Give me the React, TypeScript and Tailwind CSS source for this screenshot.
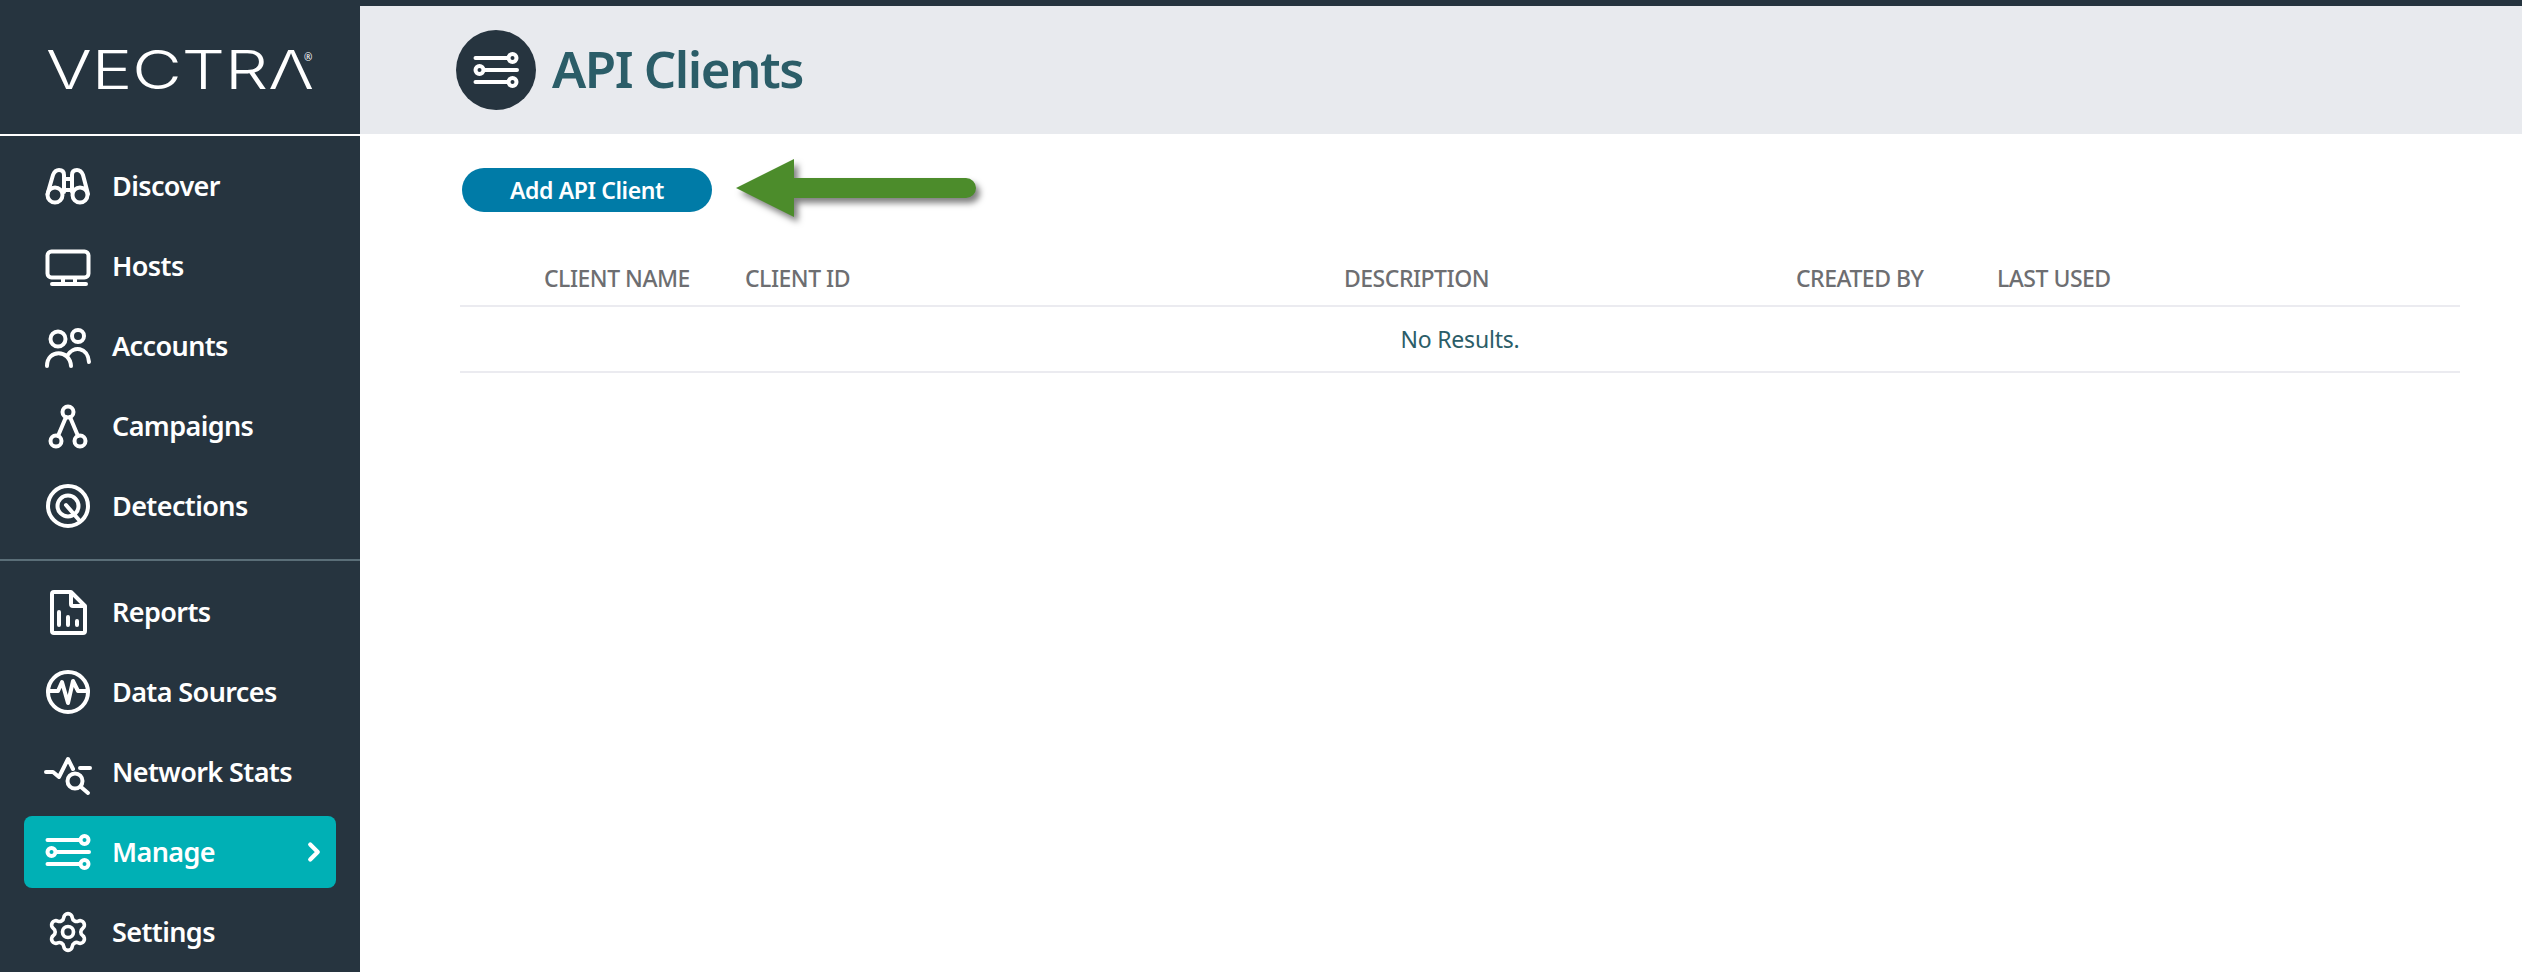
import { Settings, ChevronRight } from "lucide-react";
import type { ReactNode } from "react";

function Icon({ children }: { children: ReactNode }) {
  return (
    <svg
      viewBox="0 0 44 44"
      fill="none"
      stroke="currentColor"
      strokeWidth={4}
      strokeLinecap="round"
      strokeLinejoin="round"
      className="w-[44px] h-[44px] shrink-0 overflow-visible text-white"
    >
      {children}
    </svg>
  );
}

const ManageIcon = () => (
  <Icon>
    <path d="M1.500 10H33M11 22H43M1.500 34H33" />
    <circle cx="38.500" cy="10" r="4" />
    <circle cx="5.500" cy="22" r="4" />
    <circle cx="38.500" cy="34" r="4" />
  </Icon>
);

const navTop = [
  {
    label: "Discover",
    icon: (
      <Icon>
        <circle cx="9" cy="31" r="7.500" />
        <circle cx="34" cy="31" r="7.500" />
        <path d="M1.500 30L7 11Q9 6 13 6Q18 6 18 11V28M42 30L37 11Q35 6 31 6Q26 6 26 11V28M18 15H26M18 26H26" />
      </Icon>
    ),
  },
  {
    label: "Hosts",
    icon: (
      <Icon>
        <rect x="1.500" y="7.500" width="41" height="26" rx="4" />
        <path d="M6 40H40M17 34V40M29 34V40" />
      </Icon>
    ),
  },
  {
    label: "Accounts",
    icon: (
      <Icon>
        <circle cx="12" cy="15" r="7.500" />
        <circle cx="32" cy="12" r="6" />
        <path d="M1 42C1 25 24 25 25 42M21 32C27 21 42 23 43 38" />
      </Icon>
    ),
  },
  {
    label: "Campaigns",
    icon: (
      <Icon>
        <circle cx="22" cy="8" r="5.500" />
        <circle cx="10" cy="37" r="5.500" />
        <circle cx="34" cy="37" r="5.500" />
        <path d="M20 13L12 32M24 13L32 32" />
      </Icon>
    ),
  },
  {
    label: "Detections",
    icon: (
      <Icon>
        <circle cx="22" cy="22" r="20" />
        <circle cx="22" cy="22" r="10.500" />
        <path d="M20 21L33 36" />
      </Icon>
    ),
  },
];

const navBottom = [
  {
    label: "Reports",
    icon: (
      <Icon>
        <path d="M8 2H25L39 16V41Q39 43 37 43H8Q6 43 6 41V4Q6 2 8 2ZM25 2V14Q25 16 27 16H39" />
        <path d="M13 22V35M22 27V35M31 31V35" />
      </Icon>
    ),
  },
  {
    label: "Data Sources",
    icon: (
      <Icon>
        <circle cx="22" cy="22" r="20" />
        <path d="M2 21H12L16 12L22 33L27 11L32 21H42" />
      </Icon>
    ),
  },
  {
    label: "Network Stats",
    icon: (
      <Icon>
        <path d="M0 22H7L13 27L22 9L27 19M34 18H44" />
        <circle cx="29" cy="31" r="7.500" />
        <path d="M35 37L42 43" />
      </Icon>
    ),
  },
  { label: "Manage", icon: <ManageIcon />, active: true },
  {
    label: "Settings",
    icon: <Settings size={44} strokeWidth={2} className="shrink-0 text-white" />,
  },
];

function NavItem({ label, icon, active }: { label: string; icon: ReactNode; active?: boolean }) {
  return (
    <div className={`h-[72px] rounded-[8px] pl-[22px] pr-[7px] flex items-center gap-[22px] ${active ? "bg-[#00b0b5]" : ""}`}>
      {icon}
      <span className="flex-1 text-white text-[27px] font-semibold tracking-[-0.6px]">{label}</span>
      {active && <ChevronRight size={30} strokeWidth={3.4} className="text-white" />}
    </div>
  );
}

const columns = [
  { label: "CLIENT NAME" },
  { label: "CLIENT ID" },
  { label: "DESCRIPTION" },
  { label: "CREATED BY" },
  { label: "LAST USED" },
];

export default function App() {
  return (
    <div className="h-[972px] w-full overflow-hidden flex flex-col bg-white font-['Noto_Sans',sans-serif]">
      <div className="h-[6px] shrink-0 bg-[#26343f]" />
      <div className="flex flex-1 min-h-0">
        <aside className="w-[360px] shrink-0 bg-[#26343f] flex flex-col">
          <div className="h-[128px] shrink-0 border-b-[2px] border-white box-content flex items-center pl-[46px] relative" aria-label="VECTRA">
            <span className="text-white text-[54px] leading-none font-light font-['Inter',sans-serif] origin-left scale-x-[1.26] whitespace-nowrap">
              VECTRΛ
            </span>
            <span className="absolute left-[304px] top-[46px] text-white text-[10px] leading-none">®</span>
          </div>
          <nav className="flex flex-col gap-2 px-[24px] pt-[14px] pb-[17px] border-b-[2px] border-[#5a6e78]">
            {navTop.map((item) => (
              <NavItem key={item.label} {...item} />
            ))}
          </nav>
          <nav className="flex flex-col gap-2 px-[24px] pt-[15px]">
            {navBottom.map((item) => (
              <NavItem key={item.label} {...item} />
            ))}
          </nav>
        </aside>
        <main className="flex-1 min-w-0 flex flex-col">
          <header className="h-[128px] shrink-0 bg-[#e8eaee] flex items-center pl-[96px] gap-[16px]">
            <div className="w-[80px] h-[80px] rounded-full bg-[#26343f] flex items-center justify-center">
              <ManageIcon />
            </div>
            <h1 className="text-[51px] leading-none font-semibold text-[#2b5d68] tracking-[-1.5px] -mt-1">API Clients</h1>
          </header>
          <div className="pt-[29px] pl-[100px] pr-[62px]">
            <div className="flex items-center pl-[2px] gap-[24px]">
              <button className="w-[250px] h-[44px] rounded-full bg-[#007ba7] text-white text-[23px] font-semibold tracking-[-0.4px]">
                Add API Client
              </button>
              <svg viewBox="0 0 240 58" className="w-[240px] h-[58px] -mt-1 overflow-visible drop-shadow-[4px_5px_3px_rgba(0,0,0,0.5)]">
                <path d="M0 29L58 0V19H230A10 10 0 0 1 230 39H58V58Z" fill="#4c8c2b" />
              </svg>
            </div>
            <div className="mt-[49px] h-[39px] grid grid-cols-[84px_201px_599px_452px_201px_1fr] border-b-[2px] border-[#ebebf0] box-content">
              <div />
              {columns.map((c) => (
                <div key={c.label} className="text-[23px] leading-[24px] font-medium text-[#6d6e71] tracking-[-0.5px] whitespace-nowrap">
                  {c.label}
                </div>
              ))}
            </div>
            <div className="h-[64px] flex items-center justify-center border-b-[2px] border-[#ebebf0] box-content text-[23px] text-[#2b5d68] tracking-[-0.2px]">
              No Results.
            </div>
          </div>
        </main>
      </div>
    </div>
  );
}
